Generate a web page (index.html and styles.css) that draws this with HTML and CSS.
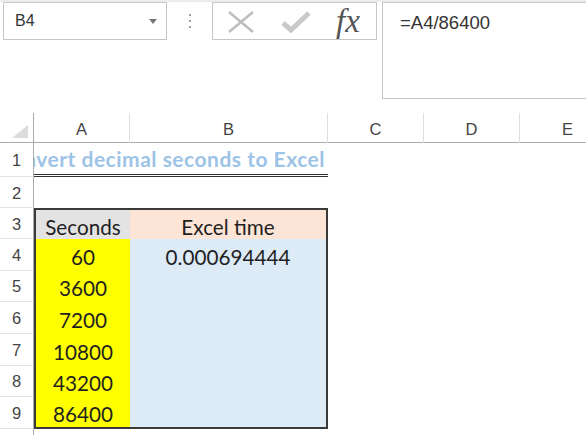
FILE: index.html
```html
<!DOCTYPE html>
<html lang="en">

<head>
  <meta charset="UTF-8" />
  <title>Excel time</title>
  <link rel="stylesheet" href="styles.css">
</head>

<body>
  <!-- 编辑栏 -->
  <div class="topbar">
    <div class="namebox">
      <span>B4</span>
      <i class="caret"></i>
    </div>
    <div class="grip"><i></i><i></i><i></i></div>
    <div class="fxbox">
      <svg class="ico-x" width="28" height="22" viewBox="0 0 28 22">
        <path d="M2 1 L26 21 M26 1 L2 21" stroke="#bcbcbc" stroke-width="2.4" fill="none" />
      </svg>
      <svg class="ico-ok" width="30" height="22" viewBox="0 0 30 22">
        <path d="M2 12 L10 19 L28 2" stroke="#c9c9c9" stroke-width="5" fill="none" />
      </svg>
      <span class="fx">fx</span>
    </div>
    <div class="formula">=A4/86400</div>
  </div>

  <!-- 表格区域 -->
  <div class="sheet">
    <div class="row head">
      <div class="corner">
        <svg width="34" height="30" viewBox="0 0 34 30">
          <polygon points="28,12 28,25 12,25" fill="#dcdcdc" />
        </svg>
      </div>
      <div class="col">A</div>
      <div class="col">B</div>
      <div class="col">C</div>
      <div class="col">D</div>
      <div class="col">E</div>
    </div>
    <div class="row r1">
      <div class="num">1</div>
      <div class="title"><span>Convert decimal seconds to Excel</span></div>
    </div>
    <div class="row r2">
      <div class="num">2</div>
    </div>
    <div class="row r3">
      <div class="num">3</div>
      <div class="cell a top grey">Seconds</div>
      <div class="cell b top peach">Excel time</div>
    </div>
    <div class="row rd">
      <div class="num">4</div>
      <div class="cell a">60</div>
      <div class="cell b">0.000694444</div>
    </div>
    <div class="row rd">
      <div class="num">5</div>
      <div class="cell a">3600</div>
      <div class="cell b"></div>
    </div>
    <div class="row rd">
      <div class="num">6</div>
      <div class="cell a">7200</div>
      <div class="cell b"></div>
    </div>
    <div class="row rd">
      <div class="num">7</div>
      <div class="cell a">10800</div>
      <div class="cell b"></div>
    </div>
    <div class="row rd">
      <div class="num">8</div>
      <div class="cell a">43200</div>
      <div class="cell b"></div>
    </div>
    <div class="row rd">
      <div class="num">9</div>
      <div class="cell a bottom">86400</div>
      <div class="cell b bottom"></div>
    </div>
    <div class="row rd">
      <div class="num"></div>
    </div>
  </div>
</body>

</html>
```

FILE: styles.css
```css
* {
  margin: 0;
  padding: 0;
  box-sizing: border-box;
}

body {
  width: 586px;
  height: 435px;
  overflow: hidden;
  background: #fff;
  font-family: "Liberation Sans", Arial, sans-serif;
  color: #333;
}

/* 编辑栏 */
.topbar {
  height: 113px;
  border-top: 2px solid #ececec;
  display: flex;
  align-items: flex-start;
  overflow: hidden;
}

.namebox {
  width: 164px;
  height: 38px;
  margin-left: 3px;
  border: 1px solid #c6c6c6;
  display: flex;
  align-items: center;
  justify-content: space-between;
  padding: 0 9px 0 11px;
  font-size: 16px;
  color: #333;
}

.namebox .caret {
  width: 0;
  height: 0;
  border-left: 4px solid transparent;
  border-right: 4px solid transparent;
  border-top: 5px solid #777;
}

.grip {
  width: 45px;
  height: 38px;
  display: flex;
  flex-direction: column;
  align-items: center;
  justify-content: center;
  gap: 4px;
}

.grip i {
  width: 2px;
  height: 2px;
  background: #a0a0a0;
}

.fxbox {
  width: 165px;
  height: 38px;
  border: 1px solid #c6c6c6;
  display: flex;
  align-items: center;
  padding-left: 14px;
}

.fxbox .ico-x {
  margin-top: 2px;
}

.fxbox .ico-ok {
  margin-left: 26px;
  margin-top: 2px;
}

.fxbox .fx {
  margin-left: 25px;
  font: italic 33px "Liberation Serif", "Times New Roman", serif;
  color: #555;
  line-height: 1;
}

.formula {
  flex: 1;
  height: 97px;
  margin-left: 5px;
  margin-right: -4px;
  border: 1px solid #c6c6c6;
  padding: 9px 0 0 17px;
  font-size: 18.5px;
  color: #333;
}

/* 表格 */
.sheet {
  overflow: hidden;
}

.row {
  display: grid;
  grid-template-columns: 34px 96px 198px 96px 96px 96px;
  height: 31px;
  font-family: Lato, "Liberation Sans", sans-serif;
}

.row.head {
  height: 30px;
  border-bottom: 1px solid #ababab;
  font-family: "Liberation Sans", Arial, sans-serif;
}

.row.r1 {
  height: 34px;
}

.row.rd {
  height: 31.67px;
}

.corner {
  border-right: 1px solid #ababab;
}

.corner svg {
  display: block;
}

.col {
  border-right: 1px solid #dedede;
  display: flex;
  align-items: center;
  justify-content: center;
  padding-top: 3px;
  font-size: 16.5px;
  color: #444;
}

.num {
  border-right: 1px solid #ababab;
  border-bottom: 1px solid #e2e2e2;
  display: flex;
  align-items: center;
  justify-content: center;
  padding-top: 2px;
  font-family: "Liberation Sans", Arial, sans-serif;
  font-size: 16.5px;
  color: #444;
}

.title {
  grid-column: 2 / 4;
  overflow: hidden;
  white-space: nowrap;
  display: flex;
  justify-content: flex-end;
  align-items: center;
  padding-right: 3px;
  border-bottom: 3px double #333;
  font-weight: bold;
  font-size: 21px;
  letter-spacing: 0.5px;
  color: #9dc3e6;
}

.cell {
  display: flex;
  align-items: center;
  justify-content: center;
  padding-top: 4px;
  font-size: 20.7px;
  color: #1f1f1f;
}

.cell.a {
  background: #ffff00;
  border-left: 2px solid #3a3a3a;
}

.cell.b {
  background: #ddebf7;
  border-right: 2px solid #3a3a3a;
}

.cell.grey {
  background: #e3e3e3;
}

.cell.peach {
  background: #fce4d6;
}

.cell.top {
  border-top: 2px solid #3a3a3a;
}

.cell.bottom {
  border-bottom: 2px solid #3a3a3a;
}
```
